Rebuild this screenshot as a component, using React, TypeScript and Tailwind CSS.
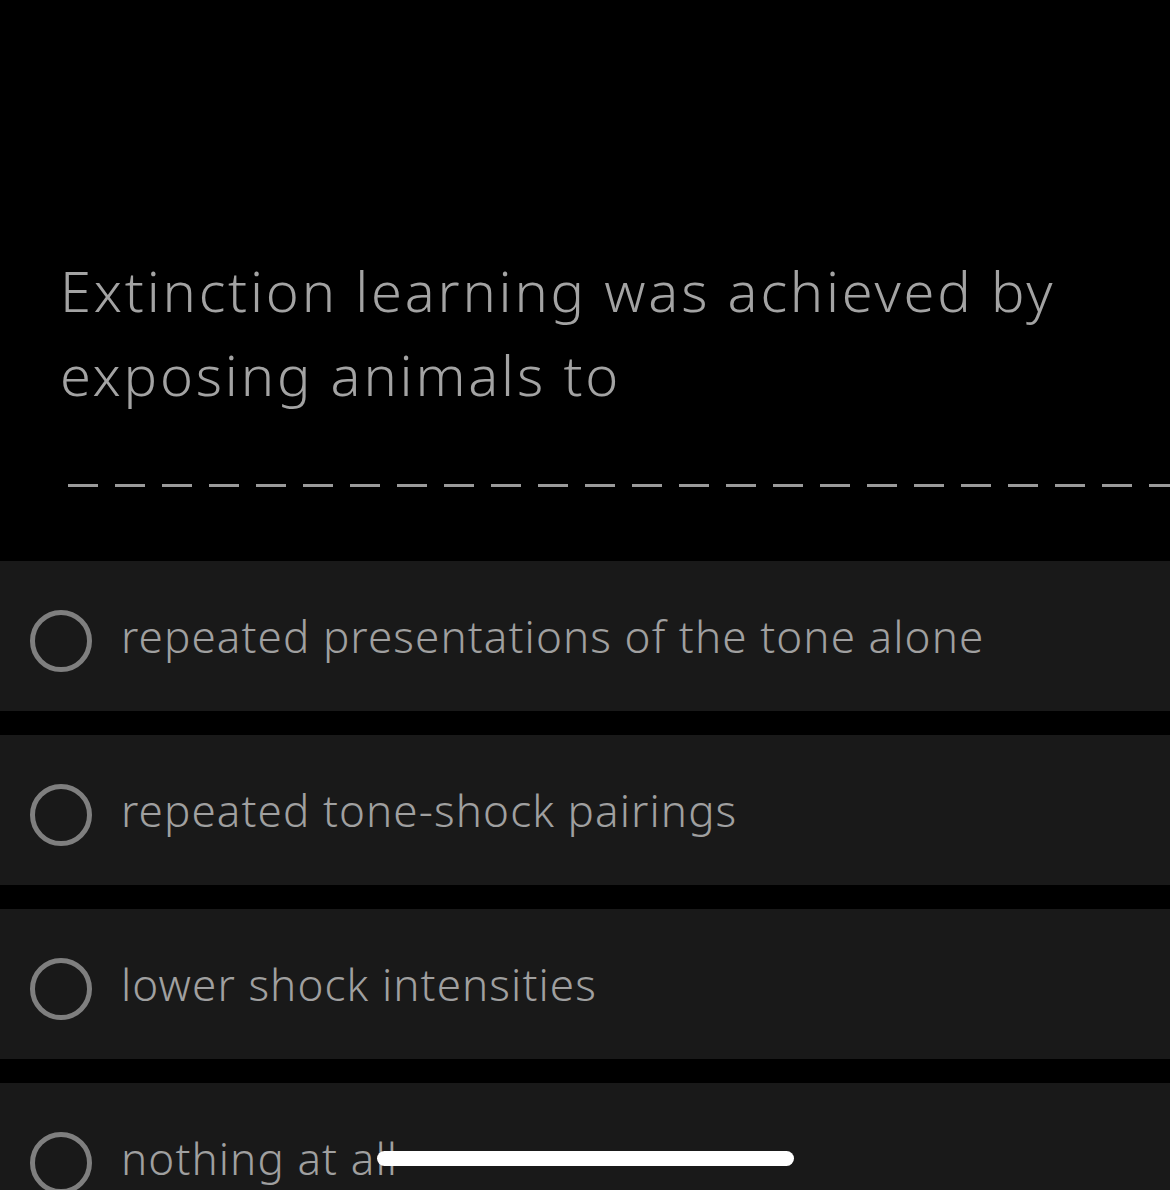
import React from "react";

const options = [
  "repeated presentations of the tone alone",
  "repeated tone-shock pairings",
  "lower shock intensities",
  "nothing at all",
];

export default function App() {
  return (
    <div
      className="relative h-[1190px] w-full overflow-hidden bg-black"
      style={{ fontFamily: '"Noto Sans", "Open Sans", sans-serif' }}
    >
      <div className="h-[248px]" />
      <div className="pl-[60px] pr-[40px] text-[56px] font-light leading-[84px] tracking-[2.8px] text-[#a3a3a3]">
        Extinction learning was achieved by exposing animals to
      </div>
      <div className="mt-[68px] ml-[68px] h-[3px] bg-[repeating-linear-gradient(to_right,#9a9a9a_0px,#9a9a9a_30px,transparent_30px,transparent_47px)]" />
      <div className="mt-[74px] flex flex-col gap-[24px]">
        {options.map((o) => (
          <div key={o} className="flex h-[150px] shrink-0 items-center bg-[#191919]">
            <div className="ml-[30px] mt-[10px] h-[62px] w-[62px] shrink-0 rounded-full border-[5px] border-[#7f7f7f]" />
            <div className="ml-[29px] text-[44px] font-light tracking-[1.1px] text-[#a0a0a0]">{o}</div>
          </div>
        ))}
      </div>
      <div className="absolute left-[377px] top-[1151px] h-[15px] w-[417px] rounded-full bg-white" />
    </div>
  );
}
